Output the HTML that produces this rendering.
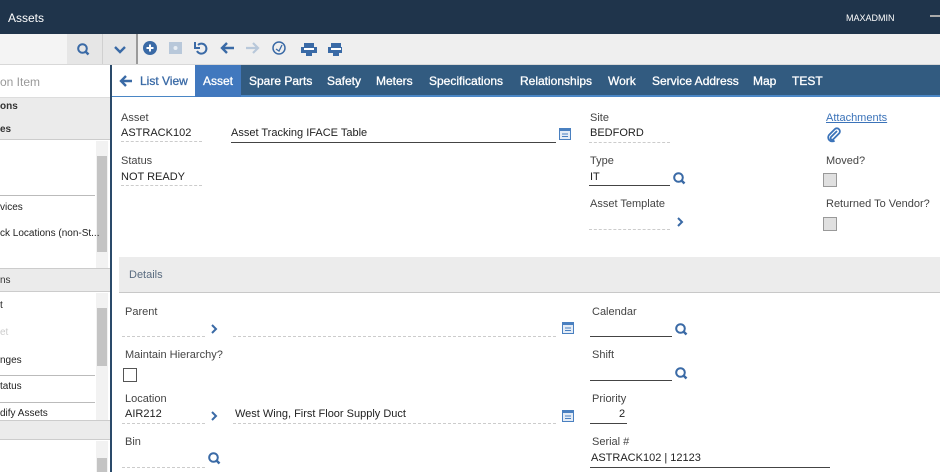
<!DOCTYPE html>
<html><head><meta charset="utf-8"><style>
*{margin:0;padding:0;box-sizing:border-box}
body{width:940px;height:472px;overflow:hidden;background:#fff;font-family:"Liberation Sans",sans-serif;font-size:11px;color:#222;position:relative}
.a{position:absolute;white-space:nowrap}
.lb{color:#444}
.dot{position:absolute;height:0;border-top:1px dashed #ccc}
.sol{position:absolute;height:0;border-top:1px solid #444}
.tab{position:absolute;top:74px;color:#fff;font-size:12px;-webkit-text-stroke:0.3px #fff}
.ln{position:absolute;height:1px;background:#bbb}
</style></head><body>
<div class="a" style="left:0;top:0;width:940px;height:34px;background:#1f344b"></div>
<div class="a" style="left:8px;top:11px;color:#fff;font-size:12px">Assets</div>
<div class="a" style="left:846px;top:13px;color:#fff;font-size:9px">MAXADMIN</div>
<div class="a" style="left:930px;top:15px;width:10px;height:2px;background:#aaa"></div>

<div class="a" style="left:0;top:34px;width:940px;height:31px;background:#efefef;border-bottom:1px solid #d8d8d8"></div>
<div class="a" style="left:0;top:34px;width:67px;height:30px;background:#f4f4f4"></div>
<div class="a" style="left:67px;top:34px;width:69px;height:30px;background:#e6e6e6"></div>
<div class="a" style="left:102px;top:34px;width:1px;height:30px;background:#d0d0d0"></div>
<div class="a" style="left:136px;top:34px;width:2px;height:30px;background:#9a9a9a"></div>
<svg class="a" style="left:76px;top:42px" width="16" height="16"><circle cx="6.5" cy="6.5" r="4.3" stroke="#3a6aa6" stroke-width="2" fill="none"/><path d="M9.5 9.5l3 3" stroke="#3a6aa6" stroke-width="2.5"/></svg>
<svg class="a" style="left:113px;top:44px" width="14" height="12"><path d="M2 3l5 5 5-5" stroke="#3a6aa6" stroke-width="2.4" fill="none"/></svg>
<svg class="a" style="left:142px;top:40px" width="200" height="18">
<circle cx="8" cy="8" r="7" fill="#3a6aa6"/><path d="M4.5 8h7M8 4.5v7" stroke="#fff" stroke-width="2"/>
<rect x="27" y="2" width="13" height="12" fill="#b8c8da"/><circle cx="33.5" cy="8" r="2" fill="#e8eef4"/>
<path d="M56 5a5 5 0 1 1-1 6" stroke="#3a6aa6" stroke-width="2" fill="none"/><path d="M53 2v6h5" stroke="#3a6aa6" stroke-width="2" fill="none"/>
<path d="M92 8h-12M85 3l-5 5 5 5" stroke="#3a6aa6" stroke-width="2.4" fill="none"/>
<path d="M104 8h12M111 3l5 5-5 5" stroke="#b8c8da" stroke-width="2.2" fill="none"/>
<circle cx="137" cy="8" r="6" stroke="#3a6aa6" stroke-width="1.5" fill="none"/><path d="M134 9l3 2 3-6" stroke="#3a6aa6" stroke-width="1.3" fill="none"/>
<path d="M162 3h10v4h3v6h-16v-6h3z" fill="#3a6aa6"/><rect x="164" y="11" width="6" height="5" fill="#3a6aa6"/><rect x="162" y="8" width="10" height="2" fill="#fff"/>
<path d="M189 3h10v4h3v6h-16v-6h3z" fill="#3a6aa6"/><rect x="191" y="11" width="6" height="5" fill="#3a6aa6"/><rect x="189" y="8" width="10" height="2" fill="#fff"/>
</svg>

<!-- left panel -->
<div class="a" style="left:0;top:65px;width:110px;height:407px;background:#fff"></div>
<div class="a" style="left:0;top:75px;color:#999;font-size:12px">on Item</div>
<div class="a" style="left:0;top:97px;width:110px;height:43px;background:#ebebeb;border-top:1px solid #ddd;border-bottom:1px solid #ccc"></div>
<div class="a" style="left:0;top:101px;font-weight:bold;color:#333;font-size:10px">ons</div>
<div class="a" style="left:0;top:124px;font-weight:bold;color:#333;font-size:10px">es</div>
<div class="a" style="left:96px;top:141px;width:12px;height:127px;background:#f2f2f2"></div>
<div class="a" style="left:97px;top:156px;width:10px;height:96px;background:#c4c4c4"></div>
<div class="ln" style="left:0;top:195px;width:95px"></div>
<div class="a" style="left:0;top:202px;font-size:10px">vices</div>
<div class="a" style="left:0;top:228px;font-size:10px">ck Locations (non-St...</div>
<div class="a" style="left:0;top:268px;width:110px;height:24px;background:#ebebeb;border-top:1px solid #ccc;border-bottom:1px solid #ccc"></div>
<div class="a" style="left:0;top:275px;font-size:10px;color:#333">ns</div>
<div class="a" style="left:96px;top:293px;width:12px;height:127px;background:#f2f2f2"></div>
<div class="a" style="left:97px;top:308px;width:10px;height:58px;background:#c4c4c4"></div>
<div class="a" style="left:0;top:300px;font-size:10px">t</div>
<div class="a" style="left:0;top:327px;font-size:10px;color:#ccc">et</div>
<div class="a" style="left:0;top:355px;font-size:10px">nges</div>
<div class="ln" style="left:0;top:375px;width:95px"></div>
<div class="a" style="left:0;top:381px;font-size:10px">tatus</div>
<div class="ln" style="left:0;top:402px;width:95px"></div>
<div class="a" style="left:0;top:408px;font-size:10px">dify Assets</div>
<div class="a" style="left:0;top:420px;width:110px;height:20px;background:#ebebeb;border-top:1px solid #ccc;border-bottom:1px solid #ccc"></div>
<div class="a" style="left:96px;top:441px;width:12px;height:31px;background:#f2f2f2"></div>
<div class="a" style="left:97px;top:458px;width:10px;height:14px;background:#c4c4c4"></div>
<div class="a" style="left:110px;top:65px;width:2px;height:407px;background:#2a4a6a"></div>

<!-- tabs -->
<div class="a" style="left:112px;top:65px;width:828px;height:32px;background:#325b80;border-bottom:2px solid #4a86c5"></div>
<div class="a" style="left:112px;top:65px;width:83px;height:31px;background:#fff"></div>
<svg class="a" style="left:118px;top:74px" width="16" height="14"><path d="M14 7H3M8 2L3 7l5 5" stroke="#3a6aa6" stroke-width="2.4" fill="none"/></svg>
<div class="tab" style="left:140px;color:#3a6aa6;-webkit-text-stroke:0.3px #3a6aa6">List View</div>
<div class="a" style="left:195px;top:65px;width:46px;height:32px;background:#4178be"></div>
<div class="tab" style="left:203px">Asset</div>
<div class="tab" style="left:249px">Spare Parts</div>
<div class="tab" style="left:327px">Safety</div>
<div class="tab" style="left:376px">Meters</div>
<div class="tab" style="left:429px">Specifications</div>
<div class="tab" style="left:520px">Relationships</div>
<div class="tab" style="left:608px">Work</div>
<div class="tab" style="left:652px">Service Address</div>
<div class="tab" style="left:753px">Map</div>
<div class="tab" style="left:792px">TEST</div>

<!-- top fields -->
<div class="a lb" style="left:121px;top:112px">Asset</div>
<div class="a" style="left:121px;top:127px">ASTRACK102</div>
<div class="dot" style="left:121px;top:141px;width:81px"></div>
<div class="a" style="left:231px;top:127px">Asset Tracking IFACE Table</div>
<div class="sol" style="left:231px;top:142px;width:325px"></div>
<svg class="a" style="left:559px;top:128px" width="12" height="12"><rect x="0.5" y="0.5" width="11" height="11" fill="#e4ecf6" stroke="#4a80c0"/><rect x="0" y="0" width="12" height="3" fill="#4a80c0"/><path d="M3 6h6M3 8.5h6" stroke="#4a80c0"/></svg>
<div class="a lb" style="left:121px;top:155px">Status</div>
<div class="a" style="left:121px;top:171px">NOT READY</div>
<div class="dot" style="left:121px;top:185px;width:81px"></div>

<div class="a lb" style="left:590px;top:112px">Site</div>
<div class="a" style="left:590px;top:127px">BEDFORD</div>
<div class="dot" style="left:589px;top:142px;width:81px"></div>
<div class="a lb" style="left:590px;top:155px">Type</div>
<div class="a" style="left:590px;top:171px">IT</div>
<div class="sol" style="left:589px;top:185px;width:81px"></div>
<svg class="a" style="left:672px;top:171px" width="16" height="16"><circle cx="6.5" cy="6.5" r="4.3" stroke="#3a6aa6" stroke-width="2" fill="none"/><path d="M9.5 9.5l3 3" stroke="#3a6aa6" stroke-width="2.5"/></svg>
<div class="a lb" style="left:590px;top:198px">Asset Template</div>
<div class="dot" style="left:589px;top:229px;width:81px"></div>
<svg class="a" style="left:676px;top:216px" width="8" height="12"><path d="M2 2l4 4-4 4" stroke="#3a6aa6" stroke-width="2" fill="none"/></svg>

<div class="a" style="left:826px;top:112px;color:#3b73b9;text-decoration:underline">Attachments</div>
<svg class="a" style="left:826px;top:127px" width="16" height="16"><path d="M11 4L5 10a1.6 1.6 0 0 0 2.3 2.3L13 6.5a3 3 0 0 0-4.3-4.3L3 8a4 4 0 0 0 5.6 5.6" stroke="#3b73b9" stroke-width="1.8" fill="none"/></svg>
<div class="a lb" style="left:826px;top:155px">Moved?</div>
<div class="a" style="left:823px;top:173px;width:14px;height:14px;background:#e0e0e0;border:1px solid #999"></div>
<div class="a lb" style="left:826px;top:198px">Returned To Vendor?</div>
<div class="a" style="left:823px;top:217px;width:14px;height:14px;background:#e0e0e0;border:1px solid #999"></div>

<!-- details -->
<div class="a" style="left:119px;top:257px;width:821px;height:36px;background:#ececec;border-bottom:1px solid #c8c8c8"></div>
<div class="a" style="left:129px;top:269px;color:#5a6c80">Details</div>

<div class="a lb" style="left:125px;top:306px">Parent</div>
<div class="dot" style="left:122px;top:336px;width:83px"></div>
<svg class="a" style="left:210px;top:323px" width="8" height="12"><path d="M2 2l4 4-4 4" stroke="#3a6aa6" stroke-width="2" fill="none"/></svg>
<div class="dot" style="left:233px;top:336px;width:323px"></div>
<svg class="a" style="left:562px;top:322px" width="12" height="12"><rect x="0.5" y="0.5" width="11" height="11" fill="#e4ecf6" stroke="#4a80c0"/><rect x="0" y="0" width="12" height="3" fill="#4a80c0"/><path d="M3 6h6M3 8.5h6" stroke="#4a80c0"/></svg>
<div class="a lb" style="left:125px;top:349px">Maintain Hierarchy?</div>
<div class="a" style="left:123px;top:368px;width:14px;height:14px;background:#fff;border:1px solid #555"></div>
<div class="a lb" style="left:125px;top:393px">Location</div>
<div class="a" style="left:125px;top:408px">AIR212</div>
<div class="dot" style="left:122px;top:423px;width:83px"></div>
<svg class="a" style="left:210px;top:410px" width="8" height="12"><path d="M2 2l4 4-4 4" stroke="#3a6aa6" stroke-width="2" fill="none"/></svg>
<div class="a" style="left:235px;top:408px">West Wing, First Floor Supply Duct</div>
<div class="dot" style="left:233px;top:423px;width:323px"></div>
<svg class="a" style="left:562px;top:410px" width="12" height="12"><rect x="0.5" y="0.5" width="11" height="11" fill="#e4ecf6" stroke="#4a80c0"/><rect x="0" y="0" width="12" height="3" fill="#4a80c0"/><path d="M3 6h6M3 8.5h6" stroke="#4a80c0"/></svg>
<div class="a lb" style="left:125px;top:436px">Bin</div>
<div class="dot" style="left:122px;top:467px;width:83px"></div>
<svg class="a" style="left:207px;top:451px" width="16" height="16"><circle cx="6.5" cy="6.5" r="4.3" stroke="#3a6aa6" stroke-width="2" fill="none"/><path d="M9.5 9.5l3 3" stroke="#3a6aa6" stroke-width="2.5"/></svg>

<div class="a lb" style="left:592px;top:306px">Calendar</div>
<div class="sol" style="left:590px;top:336px;width:82px"></div>
<svg class="a" style="left:674px;top:322px" width="16" height="16"><circle cx="6.5" cy="6.5" r="4.3" stroke="#3a6aa6" stroke-width="2" fill="none"/><path d="M9.5 9.5l3 3" stroke="#3a6aa6" stroke-width="2.5"/></svg>
<div class="a lb" style="left:592px;top:349px">Shift</div>
<div class="sol" style="left:590px;top:380px;width:82px"></div>
<svg class="a" style="left:674px;top:366px" width="16" height="16"><circle cx="6.5" cy="6.5" r="4.3" stroke="#3a6aa6" stroke-width="2" fill="none"/><path d="M9.5 9.5l3 3" stroke="#3a6aa6" stroke-width="2.5"/></svg>
<div class="a lb" style="left:592px;top:393px">Priority</div>
<div class="a" style="left:619px;top:408px">2</div>
<div class="sol" style="left:590px;top:423px;width:37px"></div>
<div class="a lb" style="left:592px;top:436px">Serial #</div>
<div class="a" style="left:591px;top:452px">ASTRACK102 | 12123</div>
<div class="sol" style="left:590px;top:467px;width:240px"></div>
</body></html>
